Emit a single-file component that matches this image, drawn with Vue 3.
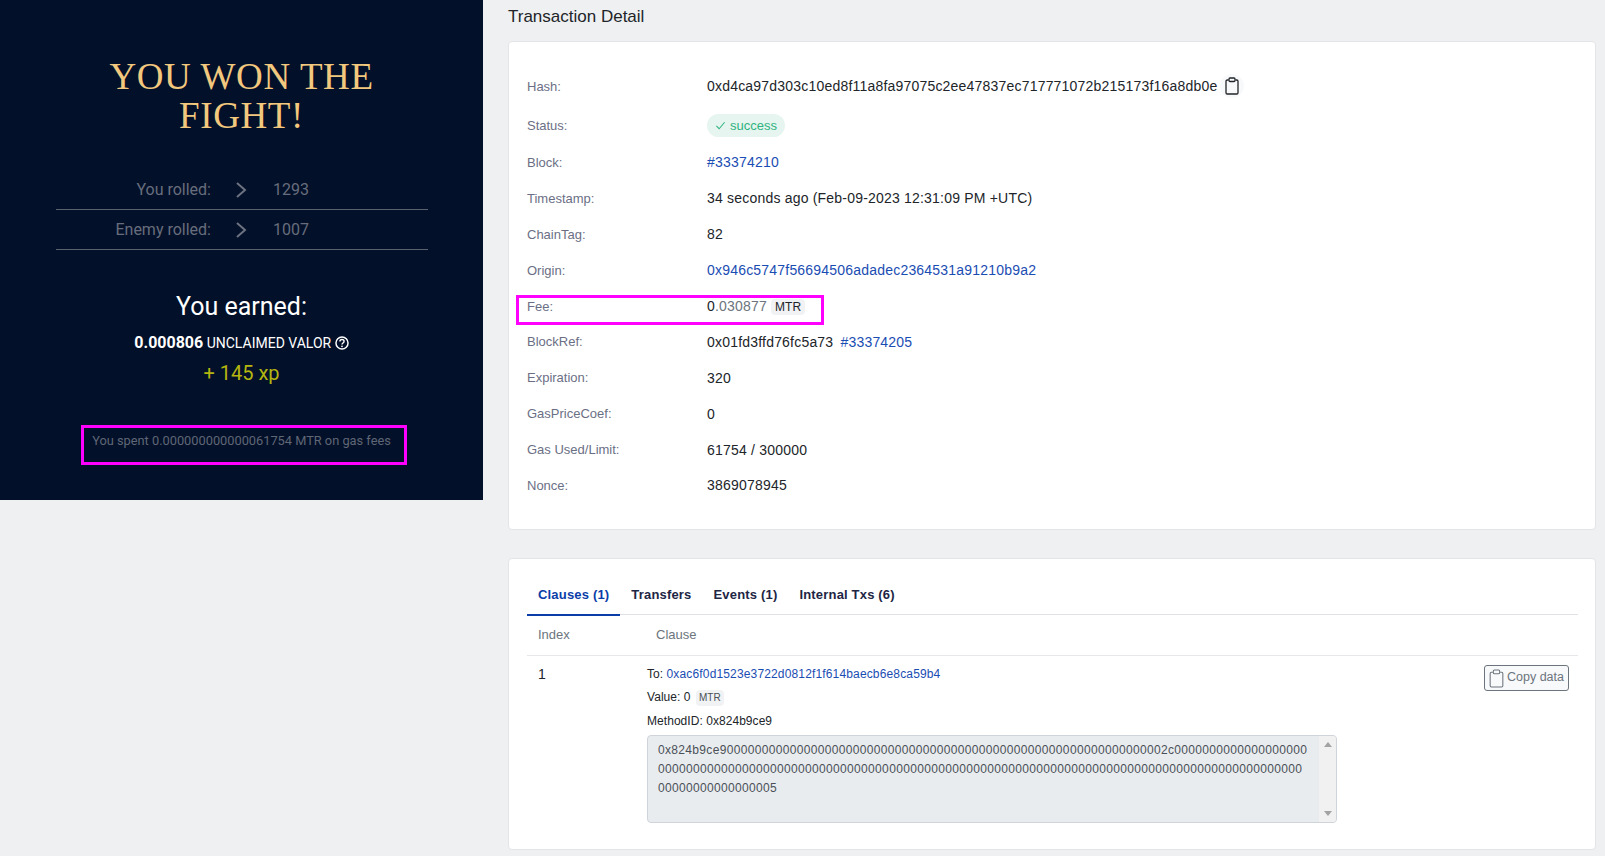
<script setup>
const rows = [
  { label: 'Block:', link: '#33374210' },
  { label: 'Timestamp:', text: '34 seconds ago (Feb-09-2023 12:31:09 PM +UTC)' },
  { label: 'ChainTag:', text: '82' },
  { label: 'Origin:', link: '0x946c5747f56694506adadec2364531a91210b9a2' },
]
const rows2 = [
  { label: 'Expiration:', text: '320' },
  { label: 'GasPriceCoef:', text: '0' },
  { label: 'Gas Used/Limit:', text: '61754 / 300000' },
  { label: 'Nonce:', text: '3869078945' },
]
const tabs = ['Clauses (1)', 'Transfers', 'Events (1)', 'Internal Txs (6)']
const dataLines = [
  '0x824b9ce9' + '0'.repeat(62) + '2c' + '0'.repeat(19),
  '0'.repeat(92),
  '0'.repeat(16) + '5',
]
</script>

<template>
  <div class="page">
    <aside class="result">
      <h1 class="title">YOU WON THE<br />FIGHT!</h1>
      <div class="rolls">
        <div class="roll">
          <span class="roll-label">You rolled:</span>
          <svg class="chev" viewBox="0 0 12 18" width="12" height="18"><path d="M2 2l8 7-8 7" fill="none" stroke="currentColor" stroke-width="2" /></svg>
          <span class="roll-val">1293</span>
        </div>
        <div class="roll">
          <span class="roll-label">Enemy rolled:</span>
          <svg class="chev" viewBox="0 0 12 18" width="12" height="18"><path d="M2 2l8 7-8 7" fill="none" stroke="currentColor" stroke-width="2" /></svg>
          <span class="roll-val">1007</span>
        </div>
      </div>
      <div class="earned">You earned:</div>
      <div class="valor">
        <b>0.000806</b> UNCLAIMED VALOR
        <svg class="help" viewBox="0 0 16 16" width="14" height="14">
          <circle cx="8" cy="8" r="6.9" fill="none" stroke="#fff" stroke-width="1.7" />
          <path d="M5.6 6.3c0-1.5 1-2.3 2.4-2.3s2.4.8 2.4 2.1c0 1.9-2.4 1.9-2.4 3.6" fill="none" stroke="#fff" stroke-width="1.6" />
          <circle cx="8" cy="11.8" r="1" fill="#fff" />
        </svg>
      </div>
      <div class="xp">+ 145 xp</div>
      <div class="spent">You spent 0.000000000000061754 MTR on gas fees</div>
      <div class="mark mark-spent"></div>
    </aside>

    <main class="detail">
      <h2 class="heading">Transaction Detail</h2>
      <section class="card card-top">
        <div class="row r-hash">
          <span class="label">Hash:</span>
          <span class="value hash">0xd4ca97d303c10ed8f11a8fa97075c2ee47837ec717771072b215173f16a8db0e
            <span class="clip-wrap">
              <svg viewBox="0 0 16 18" width="16" height="18">
                <path d="M4.5 3H3.200C2.500 3 2 3.500 2 4.200v11.600c0 .7.5 1.200 1.200 1.200h9.600c.7 0 1.200-.5 1.200-1.200V4.200C14 3.500 13.500 3 12.800 3h-1.300" fill="none" stroke="#212529" stroke-width="1.300" />
                <rect x="5" y="1" width="6" height="3.500" rx="1" fill="none" stroke="#212529" stroke-width="1.300" />
              </svg>
            </span>
          </span>
        </div>
        <div class="row r-status">
          <span class="label">Status:</span>
          <span class="value">
            <span class="pill">
              <svg viewBox="0 0 12 12" width="11" height="11"><path d="M1.500 6.500l3 3 6-7" fill="none" stroke="#2fb380" stroke-width="1.100" /></svg>
              success
            </span>
          </span>
        </div>
        <div v-for="r in rows" :key="r.label" class="row">
          <span class="label">{{ r.label }}</span>
          <a v-if="r.link" class="value link">{{ r.link }}</a>
          <span v-else class="value">{{ r.text }}</span>
        </div>
        <div class="row">
          <span class="label">Fee:</span>
          <span class="value">0<span class="muted">.030877</span> <span class="unit">MTR</span></span>
        </div>
        <div class="row">
          <span class="label">BlockRef:</span>
          <span class="value">0x01fd3ffd76fc5a73 <a class="link ref">#33374205</a></span>
        </div>
        <div v-for="r in rows2" :key="r.label" class="row">
          <span class="label">{{ r.label }}</span>
          <span class="value">{{ r.text }}</span>
        </div>
        <div class="mark mark-fee"></div>
      </section>

      <section class="card card-bottom">
        <nav class="tabs">
          <span v-for="(t, i) in tabs" :key="t" class="tab" :class="{ active: i === 0 }">{{ t }}</span>
        </nav>
        <div class="thead">
          <span class="col-index">Index</span>
          <span class="col-clause">Clause</span>
        </div>
        <div class="tbody">
          <span class="idx">1</span>
          <div class="clause">
            <div class="line to">To: <a class="link">0xac6f0d1523e3722d0812f1f614baecb6e8ca59b4</a></div>
            <div class="line val">Value: 0 <span class="unit small">MTR</span></div>
            <div class="line mid">MethodID: 0x824b9ce9</div>
            <div class="data">
              <div class="data-text">
                <div v-for="(l, i) in dataLines" :key="i">{{ l }}</div>
              </div>
              <div class="scroll">
                <i class="arrow up"></i>
                <i class="arrow down"></i>
              </div>
            </div>
          </div>
          <button class="copy">
            <svg viewBox="0 0 16 18" width="17" height="19">
              <path d="M4.500 3H3.200C2.500 3 2 3.500 2 4.200v11.600c0 .7.5 1.200 1.200 1.200h9.600c.7 0 1.200-.5 1.200-1.200V4.200C14 3.500 13.500 3 12.800 3h-1.300" fill="none" stroke="#6c757d" stroke-width="1" />
              <rect x="5" y="1" width="6" height="3.500" rx="1" fill="none" stroke="#6c757d" stroke-width="1" />
            </svg>
            Copy data
          </button>
        </div>
      </section>
    </main>
  </div>
</template>

<style>
html, body { margin: 0; background: #eff0f2; }
</style>

<style scoped>
.page {
  display: flex;
  align-items: flex-start;
  width: 1605px;
  height: 856px;
  overflow: hidden;
  background: #eff0f2;
  font-family: "Liberation Sans", Arial, sans-serif;
  color: #212529;
}
.result {
  position: relative;
  box-sizing: border-box;
  width: 483px;
  height: 500px;
  flex: none;
  background: #031029;
  padding-top: 57px;
  text-align: center;
  font-family: Roboto, sans-serif;
}
.title {
  margin: 0;
  font: 400 37px/39px "Liberation Serif", serif;
  color: #f2c87e;
  letter-spacing: 0.6px;
}
.rolls { margin: 35px 55px 0 56px; }
.roll {
  display: grid;
  grid-template-columns: 155px 40px 1fr;
  align-items: center;
  height: 40px;
  box-sizing: border-box;
  border-bottom: 1px solid #5a6270;
  color: #676d7c;
  font-size: 16px;
}
.roll-label { text-align: right; }
.chev { justify-self: center; margin-left: 20px; color: #6c7280; }
.roll-val { text-align: left; padding-left: 22px; }
.earned { margin-top: 40px; font-size: 25px; line-height: 34px; color: #fff; }
.valor { margin-top: 7px; font-size: 14px; line-height: 24px; color: #fff; }
.valor b { font-size: 16px; }
.help { vertical-align: -2px; }
.xp { margin-top: 4px; font-size: 20px; line-height: 28px; color: #b5b510; }
.spent { margin-top: 45px; font-size: 12.8px; line-height: 18px; color: #5f6675; }
.mark { position: absolute; box-sizing: border-box; border: 3px solid #ff00ff; }
.mark-spent { left: 81px; top: 425px; width: 326px; height: 40px; }

.detail { width: 1088px; margin-left: 25px; }
.heading { margin: 0; font-size: 17px; font-weight: 400; line-height: 33px; height: 41px; color: #212529; }
.card {
  position: relative;
  box-sizing: border-box;
  background: #fff;
  border: 1px solid #e3e5e8;
  border-radius: 4px;
}
.card-top { height: 489px; padding: 25px 18px 0; }
.row { display: flex; align-items: center; font-size: 14px; height: 35.9px; }
.r-hash { height: 38px; }
.r-status { height: 39.500px; padding-top: 1px; box-sizing: border-box; }
.label { width: 180px; flex: none; font-size: 13px; color: #6b6f85; }
.value { color: #212529; white-space: nowrap; letter-spacing: 0.2px; }
.hash { display: inline-flex; align-items: center; gap: 3px; }
.clip-wrap {
  display: inline-flex;
  align-items: center;
  justify-content: center;
  width: 24px;
  height: 24px;
  border-radius: 50%;
  background: #f8f9fa;
}
.link { color: #1a4db3; }
.ref { margin-left: 3px; }
.pill {
  display: inline-flex;
  align-items: center;
  gap: 4px;
  height: 23px;
  padding: 0 8px;
  border-radius: 12px;
  background: #e6f5ef;
  color: #2fb380;
  font-size: 13px;
  letter-spacing: 0;
}
.muted { color: #6c757d; }
.unit {
  display: inline-block;
  padding: 0 4px;
  border-radius: 4px;
  background: #f1f2f4;
  font-size: 12px;
  line-height: 16px;
  letter-spacing: 0;
}
.unit.small { padding: 0 3px; font-size: 10px; color: #495057; margin-left: 2px; }
.mark-fee { left: 7px; top: 253px; width: 308px; height: 30px; }

.card-bottom { height: 292px; margin-top: 28px; padding: 20px 17px 0 18px; }
.tabs { display: flex; height: 35px; border-bottom: 1px solid #dfe1e5; }
.tab {
  padding: 6px 11px 0;
  font-size: 13px;
  font-weight: 700;
  letter-spacing: 0.18px;
  color: #212544;
  height: 29px;
  line-height: 19px;
}
.tab.active { color: #0b3da8; border-bottom: 2px solid #0b3da8; }
.thead {
  display: flex;
  align-items: center;
  height: 38px;
  padding-bottom: 2px;
  border-bottom: 1px solid #e6e7ea;
  font-size: 13px;
  color: #6c757d;
}
.col-index { width: 129px; padding-left: 11px; box-sizing: border-box; }
.tbody { position: relative; display: flex; }
.idx { box-sizing: border-box; width: 120px; padding: 10px 0 0 11px; font-size: 14px; color: #212529; }
.clause { width: 690px; font-size: 12px; }
.line { height: 24px; line-height: 24px; color: #212529; letter-spacing: 0.05px; }
.to { margin-top: 6px; height: 23px; }
.to .link { letter-spacing: 0.15px; }
.data {
  display: flex;
  box-sizing: border-box;
  height: 88px;
  margin-top: 2px;
  background: #e9ecef;
  border: 1px solid #ced4da;
  border-radius: 4px;
  overflow: hidden;
}
.data-text {
  flex: 1;
  padding: 5px 10px;
  font-size: 12px;
  line-height: 19px;
  letter-spacing: 0.33px;
  color: #495057;
  white-space: pre;
  overflow: hidden;
}
.scroll { position: relative; width: 17px; flex: none; background: #f1f1f1; }
.arrow { position: absolute; left: 5px; width: 0; height: 0; border-left: 4px solid transparent; border-right: 4px solid transparent; }
.arrow.up { top: 6px; border-bottom: 5px solid #a3a3a3; }
.arrow.down { bottom: 6px; border-top: 5px solid #a3a3a3; }
.copy {
  position: absolute;
  right: 9px;
  top: 9px;
  display: flex;
  align-items: center;
  gap: 2px;
  box-sizing: border-box;
  width: 85px;
  height: 26px;
  padding: 0 3px 2px 3px;
  background: #f8f9fb;
  border: 1px solid #6c757d;
  border-radius: 3px;
  font: 12.5px "Liberation Sans", sans-serif;
  color: #6c757d;
  white-space: nowrap;
}
.copy svg { flex: none; margin-top: 2px; }
</style>
